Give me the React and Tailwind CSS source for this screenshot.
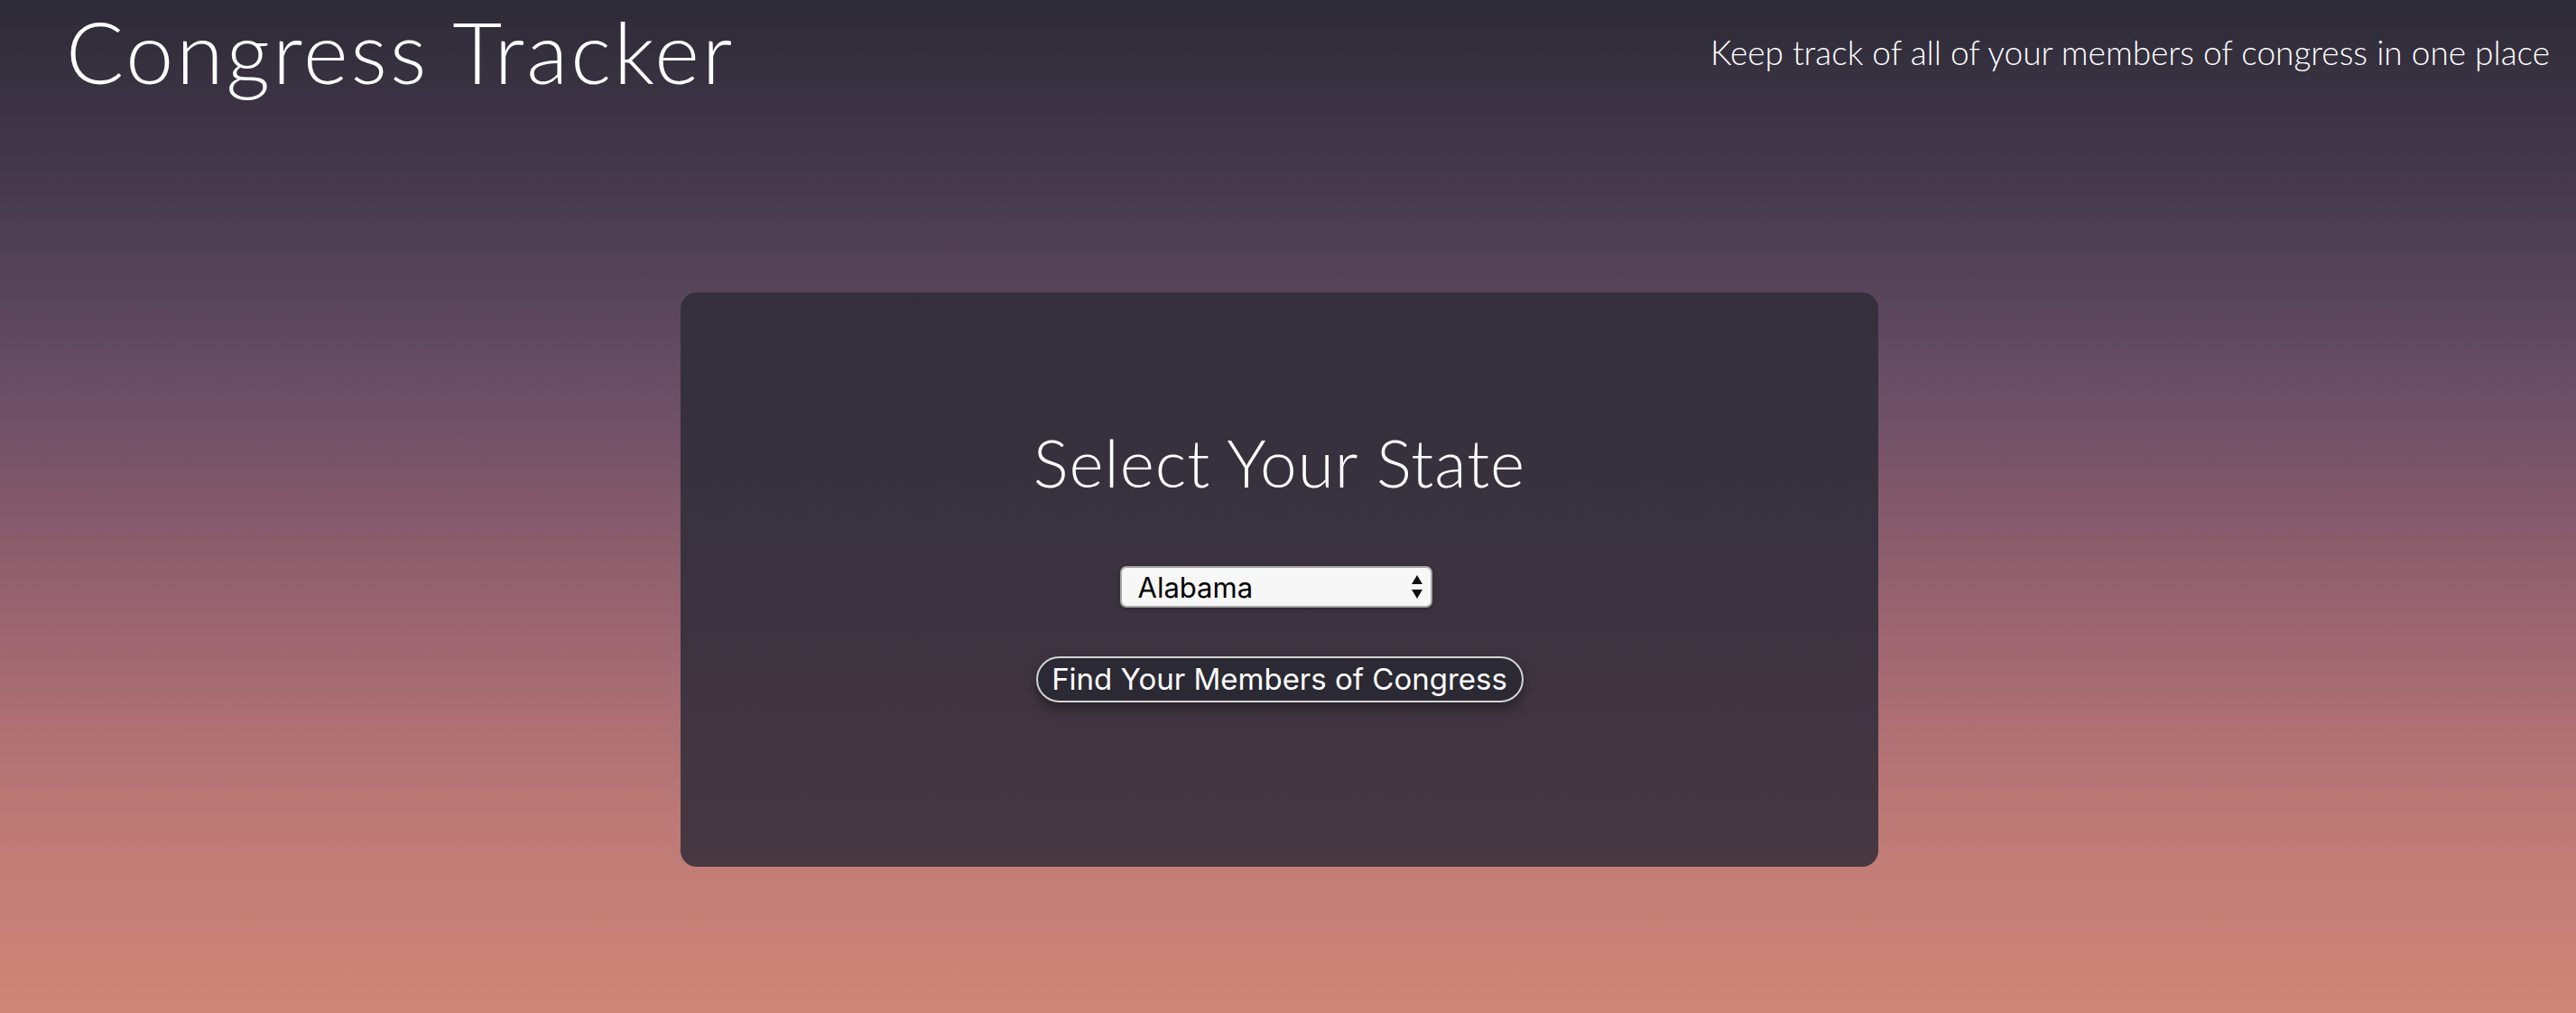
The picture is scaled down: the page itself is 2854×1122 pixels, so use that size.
export default function App() {
  return (
    <div className="w-full h-[1122px] overflow-hidden flex flex-col bg-[linear-gradient(180deg,#2d2b37_0%,#3d3445_12%,#4f3f55_24%,#644c64_36%,#7e5769_48%,#986370_60%,#ad6f74_71%,#be7a76_82%,#d08676_100%)]">
      <header className="flex justify-between items-start pl-[73px] pr-[29px] text-white font-['Lato','Open_Sans',sans-serif]">
        <h1 className="mt-[2px] text-[95px] leading-[1.15] font-light tracking-[3px] whitespace-nowrap">Congress Tracker</h1>
        <p className="mt-[39px] text-[37px] leading-none font-light whitespace-nowrap">Keep track of all of your members of congress in one place</p>
      </header>
      <main className="mt-[213px] ml-[754px] w-[1327px] h-[636px] rounded-[18px] bg-[linear-gradient(180deg,#33303c_0%,#3a323f_50%,#473842_100%)] flex flex-col items-center pt-[152px]">
        <h2 className="text-[73px] leading-none font-light text-white font-['Lato','Open_Sans',sans-serif] tracking-[1px]">Select Your State</h2>
        <div className="relative mt-[78px] mr-[8px] w-[346px] h-[46px]">
          <select
            defaultValue="Alabama"
            className="appearance-none w-full h-full rounded-[7px] border-2 border-[#a8a8a8] bg-[#f7f7f7] pl-[18px] text-[31px] leading-none text-black font-['Inter','Roboto',sans-serif] shadow-[0_2px_4px_rgba(0,0,0,0.25)]"
          >
            <option>Alabama</option>
            <option>Alaska</option>
            <option>Arizona</option>
          </select>
          <svg className="absolute right-[10px] top-[8px] pointer-events-none" width="14" height="30" viewBox="0 0 14 30">
            <path d="M7 2 L13 12 L1 12 Z" fill="#111" />
            <path d="M1 18 L13 18 L7 28 Z" fill="#111" />
          </svg>
        </div>
        <button className="mt-[54px] w-[540px] h-[51px] rounded-full border-2 border-[#d4d4d4] bg-[#2b2933] text-white text-[33px] leading-none font-['Inter','Roboto',sans-serif] shadow-[0_8px_14px_rgba(0,0,0,0.35)]">
          Find Your Members of Congress
        </button>
      </main>
    </div>
  );
}
